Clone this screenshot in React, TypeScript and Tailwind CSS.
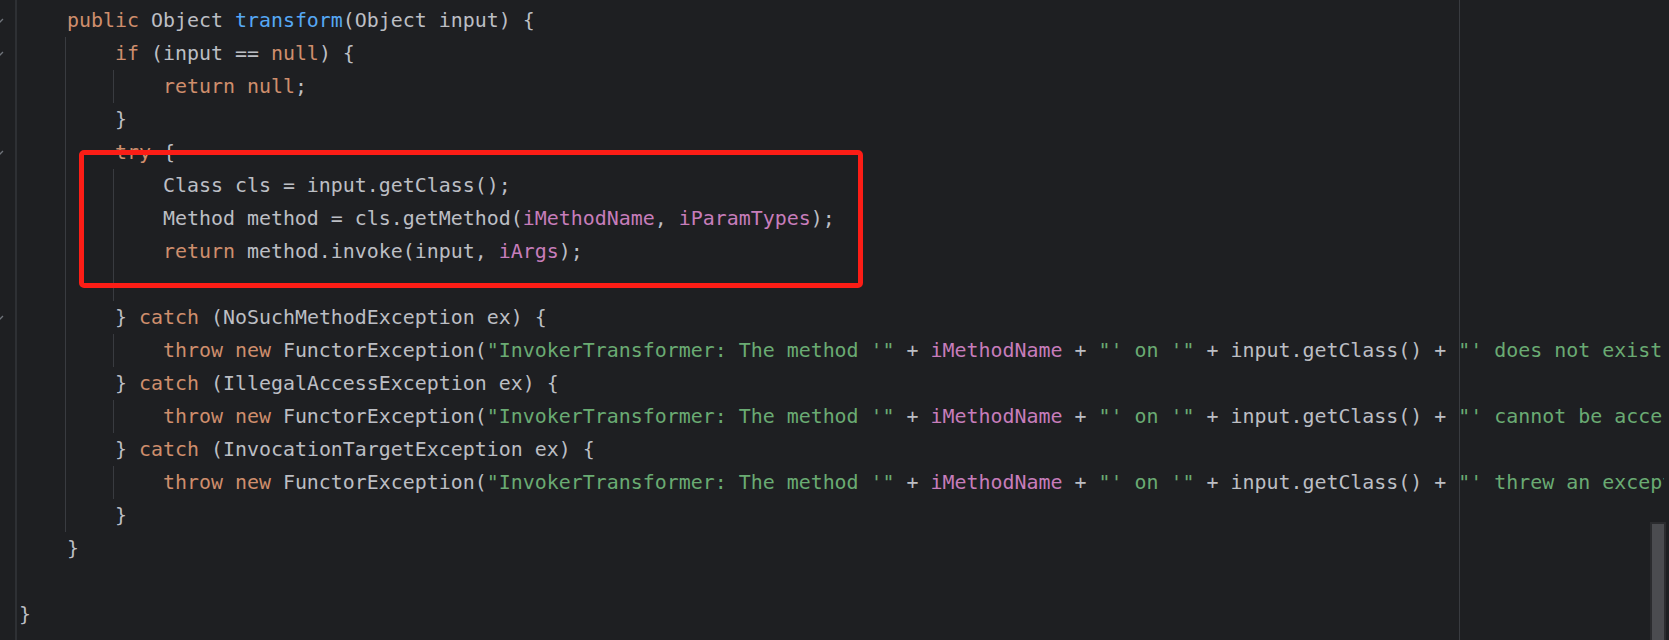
import React from "react";

type Tok = [string, string];

const c = {
  t: "text-[#bcbec4]",
  k: "text-[#cf8e6d]",
  m: "text-[#56a8f5]",
  f: "text-[#c77dbb]",
  s: "text-[#6aab73]",
};

const sp = (n: number): Tok => ["t", " ".repeat(n)];

const throwLine = (msg: string, tail: string): Tok[] => [
  sp(12),
  ["k", "throw new"],
  ["t", " FunctorException("],
  ["s", "\"InvokerTransformer: The method '\""],
  ["t", " + "],
  ["f", "iMethodName"],
  ["t", " + "],
  ["s", "\"' on '\""],
  ["t", " + input.getClass() + "],
  ["s", `"' ${msg}"`],
  ["t", tail],
];

// guides: how many indent guides run through the line (at x 65 and 113)
const lines: { fold?: boolean; guides: number; toks: Tok[] }[] = [
  { fold: true, guides: 0, toks: [sp(4), ["k", "public"], ["t", " Object "], ["m", "transform"], ["t", "(Object input) {"]] },
  { fold: true, guides: 1, toks: [sp(8), ["k", "if"], ["t", " (input == "], ["k", "null"], ["t", ") {"]] },
  { guides: 2, toks: [sp(12), ["k", "return null"], ["t", ";"]] },
  { guides: 1, toks: [sp(8), ["t", "}"]] },
  { fold: true, guides: 1, toks: [sp(8), ["k", "try"], ["t", " {"]] },
  { guides: 2, toks: [sp(12), ["t", "Class cls = input.getClass();"]] },
  { guides: 2, toks: [sp(12), ["t", "Method method = cls.getMethod("], ["f", "iMethodName"], ["t", ", "], ["f", "iParamTypes"], ["t", ");"]] },
  { guides: 2, toks: [sp(12), ["k", "return"], ["t", " method.invoke(input, "], ["f", "iArgs"], ["t", ");"]] },
  { guides: 2, toks: [] },
  { fold: true, guides: 1, toks: [sp(8), ["t", "} "], ["k", "catch"], ["t", " (NoSuchMethodException ex) {"]] },
  { guides: 2, toks: throwLine("does not exist", ");") },
  { guides: 1, toks: [sp(8), ["t", "} "], ["k", "catch"], ["t", " (IllegalAccessException ex) {"]] },
  { guides: 2, toks: throwLine("cannot be accessed", ");") },
  { guides: 1, toks: [sp(8), ["t", "} "], ["k", "catch"], ["t", " (InvocationTargetException ex) {"]] },
  { guides: 2, toks: throwLine("threw an exception", ", ex);") },
  { guides: 1, toks: [sp(8), ["t", "}"]] },
  { guides: 0, toks: [sp(4), ["t", "}"]] },
  { guides: 0, toks: [] },
  { guides: 0, toks: [["t", "}"]] },
];

const Fold = () => (
  <svg width="8" height="6" viewBox="0 0 8 6" className="-ml-[4px]">
    <polyline points="1,1 4,4 7,1" fill="none" stroke="#6f737a" strokeWidth="1.3" />
  </svg>
);

export default function App() {
  return (
    <div className="relative flex h-[640px] w-full overflow-hidden bg-[#1e1f22]">
      {/* gutter with fold markers */}
      <div className="flex w-[15px] shrink-0 flex-col pt-[4px]">
        {lines.map((l, i) => (
          <div key={i} className="flex h-[33px] items-center overflow-hidden">
            {l.fold && <Fold />}
          </div>
        ))}
      </div>
      <div className="w-[2px] shrink-0 bg-[#2e3034]" />

      {/* code */}
      <div
        className="flex min-w-0 flex-1 flex-col overflow-hidden pl-[2px] pt-[4px] text-[19.93px] leading-[33px]"
        style={{ fontFamily: '"DejaVu Sans Mono", "Liberation Mono", monospace' }}
      >
        {lines.map((l, i) => (
          <div key={i} className="relative h-[33px] whitespace-pre">
            {l.guides >= 1 && <span className="absolute left-[46px] top-0 h-full w-px bg-[#393b40]" />}
            {l.guides >= 2 && <span className="absolute left-[94px] top-0 h-full w-px bg-[#393b40]" />}
            {l.toks.map(([k, s], j) => (
              <span key={j} className={c[k as keyof typeof c]}>
                {s}
              </span>
            ))}
          </div>
        ))}
      </div>
      <div className="w-[5px] shrink-0" />

      {/* right margin guide */}
      <div className="absolute left-[1459px] top-0 h-full w-px bg-[#393b40]" />

      {/* highlight box */}
      <div className="absolute left-[79px] top-[150px] h-[138px] w-[784px] rounded-[5px] border-[5px] border-[#fc1d16]" />

      {/* scrollbar */}
      <div className="absolute left-[1650px] top-[522px] h-[118px] w-[16px] bg-[#2b2c2f] px-[2px] pt-[2px]">
        <div className="h-full w-full bg-[#4b4c50]" />
      </div>
    </div>
  );
}
